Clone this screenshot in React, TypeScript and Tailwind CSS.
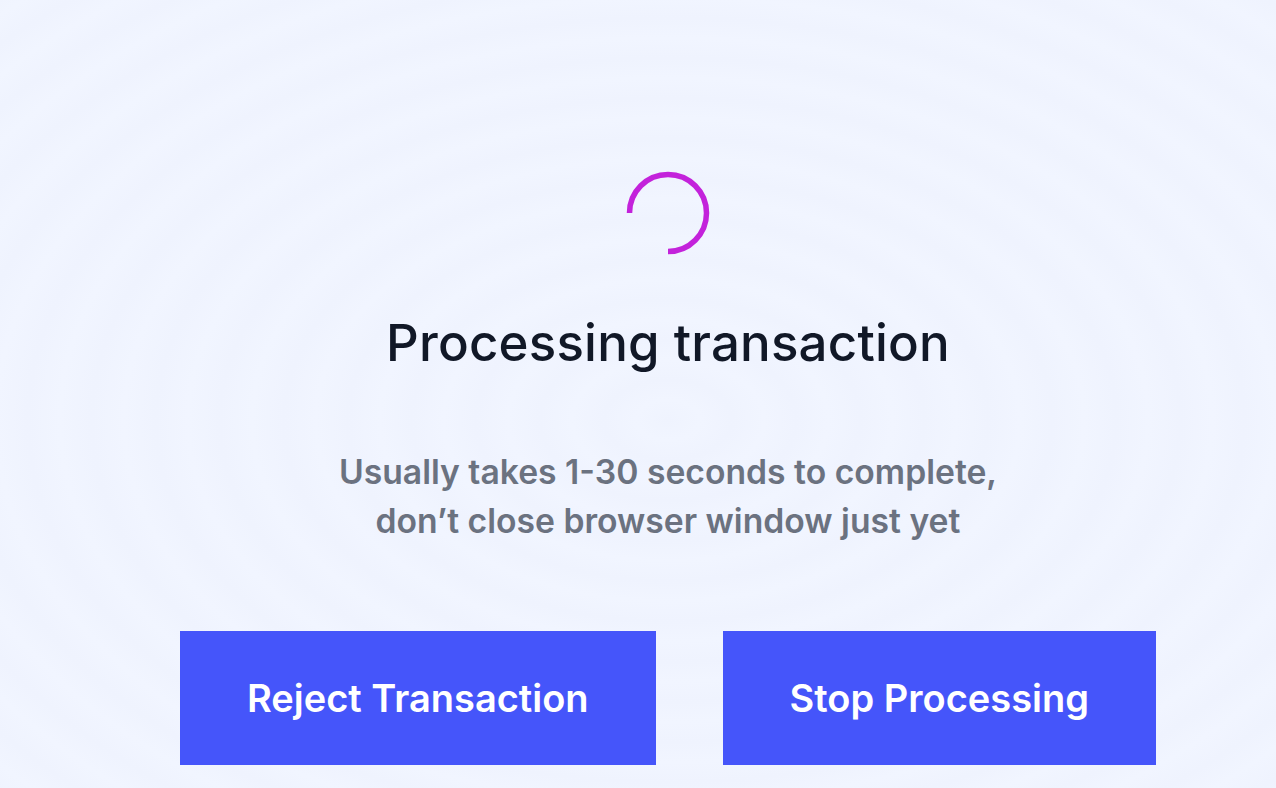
import React from 'react';

function Spinner() {
  // three-quarter arc: from 9 o'clock clockwise round to 6 o'clock
  return (
    <svg width="84" height="84" viewBox="0 0 84 84" fill="none" className="shrink-0">
      <path
        d="M 3.5 42 A 38.5 38.5 0 1 1 42 80.5"
        stroke="#c322db"
        strokeWidth="5.5"
        strokeLinecap="butt"
      />
    </svg>
  );
}

export default function App() {
  return (
    <div
      className="w-full h-[788px] overflow-hidden bg-[#f0f4fe] bg-[repeating-radial-gradient(ellipse_at_668px_420px,#eff3fe_0px,#f1f5ff_32px,#eff3fe_64px)] flex flex-col items-center pl-[60px]"
      style={{ fontFamily: 'Inter, "Noto Sans", sans-serif' }}
    >
      <div className="mt-[171px]">
        <Spinner />
      </div>

      <h1 className="mt-[64px] text-[51px] leading-[48px] font-medium text-[#111827] tracking-[0.2px]">
        Processing transaction
      </h1>

      <p className="mt-[80px] text-[33.7px] leading-[49px] font-semibold text-[#6b7280] text-center">
        Usually takes 1-30 seconds to complete,
        <br />
        don’t close browser window just yet
      </p>

      <div className="mt-[86px] flex gap-[67px]">
        <button className="h-[134px] px-[67px] bg-[#4555fa] text-white text-[38px] font-semibold flex items-center">
          Reject Transaction
        </button>
        <button className="h-[134px] px-[67px] bg-[#4555fa] text-white text-[38px] font-semibold flex items-center">
          Stop Processing
        </button>
      </div>
    </div>
  );
}
